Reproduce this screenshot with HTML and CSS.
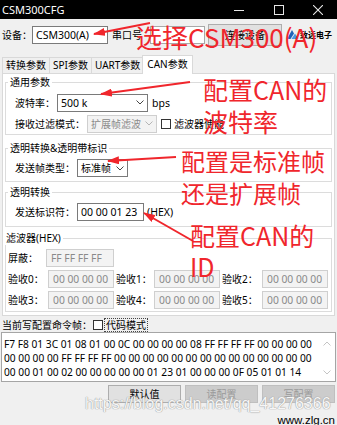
FILE: index.html
```html
<!DOCTYPE html>
<html lang="zh-CN">
<head>
<meta charset="utf-8">
<title>CSM300CFG</title>
<link rel="stylesheet" href="styles.css">
</head>
<body>
<div class="titlebar">
  <span class="title">CSM300CFG</span>
  <span class="ctl"><svg width="10" height="10" viewBox="0 0 10 10"><path d="M0 5.5h10" stroke="#e6e6e6" stroke-width="1"/></svg></span>
  <span class="ctl"><svg width="10" height="10" viewBox="0 0 10 10"><rect x="0.5" y="0.5" width="9" height="9" fill="none" stroke="#e6e6e6"/></svg></span>
  <span class="ctl ctl-close"><svg width="10" height="10" viewBox="0 0 10 10"><path d="M0 0L10 10M10 0L0 10" stroke="#e6e6e6" stroke-width="1.1"/></svg></span>
</div>

<div class="devrow">
  <span class="lbl dev-lbl">设备：</span>
  <div class="field dev-combo">CSM300(A)</div>
  <span class="lbl port-lbl">串口号</span>
  <div class="field port-combo"></div>
  <div class="btn connect">连接设备</div>
  <div class="logo">
    <svg width="13" height="11" viewBox="0 0 13 11"><path d="M1 10L6 1L8 4.5L4.5 10Z" fill="#1f64b8"/><path d="M5.5 10L9 4.5L12.5 10Z" fill="#4a98e6"/></svg>
    <span>致远电子</span>
  </div>
</div>

<div class="tabs">
  <div class="tab">转换参数</div>
  <div class="tab">SPI参数</div>
  <div class="tab">UART参数</div>
  <div class="tab active">CAN参数</div>
</div>

<div class="tabpage">
  <fieldset class="grp g1">
    <legend>通用参数</legend>
    <div class="row">
      <span class="lbl l-baud">波特率：</span>
      <div class="field combo c-baud"><span>500 k</span><svg width="8" height="5" viewBox="0 0 8 5"><path d="M0.5 0.5L4 4L7.5 0.5" fill="none" stroke="#444"/></svg></div>
      <span class="unit">bps</span>
    </div>
    <div class="row">
      <span class="lbl l-mode">接收过滤模式：</span>
      <div class="field combo disabled c-mode"><span>扩展帧滤波</span><svg width="8" height="5" viewBox="0 0 8 5"><path d="M0.5 0.5L4 4L7.5 0.5" fill="none" stroke="#b5b5b5"/></svg></div>
      <span class="check"></span><span class="check-lbl">滤波器使能</span>
    </div>
  </fieldset>

  <fieldset class="grp g2">
    <legend>透明转换&amp;透明带标识</legend>
    <div class="row row22">
      <span class="lbl l-six">发送帧类型：</span>
      <div class="field combo c-type"><span>标准帧</span><svg width="8" height="5" viewBox="0 0 8 5"><path d="M0.5 0.5L4 4L7.5 0.5" fill="none" stroke="#444"/></svg></div>
    </div>
  </fieldset>

  <fieldset class="grp g3">
    <legend>透明转换</legend>
    <div class="row row22">
      <span class="lbl l-six">发送标识符：</span>
      <div class="field c-id">00 00 01 23</div>
      <span class="unit">(HEX)</span>
    </div>
  </fieldset>

  <fieldset class="grp g4">
    <legend>滤波器(HEX)</legend>
    <div class="filters">
      <span class="flbl">屏蔽：</span><div class="field disabled fbox mask">FF FF FF FF</div>
      <span class="fill"></span><span class="fill"></span><span class="fill"></span><span class="fill"></span>
      <span class="flbl">验收0：</span><div class="field disabled fbox">00 00 00 00</div>
      <span class="flbl f2">验收1：</span><div class="field disabled fbox">00 00 00 00</div>
      <span class="flbl f2">验收2：</span><div class="field disabled fbox">00 00 00 00</div>
      <span class="flbl">验收3：</span><div class="field disabled fbox">00 00 00 00</div>
      <span class="flbl f2">验收4：</span><div class="field disabled fbox">00 00 00 00</div>
      <span class="flbl f2">验收5：</span><div class="field disabled fbox">00 00 00 00</div>
    </div>
  </fieldset>
</div>

<div class="cmdrow">
  <span class="lbl">当前写配置命令帧：</span>
  <span class="check cmd-check"></span>
  <span class="focus">代码模式</span>
</div>

<div class="cmdbox">
  <div class="hex">F7 F8 01 3C 01 08 01 00 0C 00 00 00 00 08 FF FF FF FF 00 00 00 00<br>00 00 00 00 FF FF FF FF 00 00 00 00 00 00 00 00 00 00 00 00 00 00<br>00 00 01 00 02 00 00 00 00 00 01 23 01 00 00 00 0F 05 01 01 14</div>
  <div class="scroll">
    <svg width="8" height="5" viewBox="0 0 8 5"><path d="M0.5 4.5L4 1L7.5 4.5" fill="none" stroke="#c4c4c4"/></svg>
    <svg width="8" height="5" viewBox="0 0 8 5"><path d="M0.5 0.5L4 4L7.5 0.5" fill="none" stroke="#c4c4c4"/></svg>
  </div>
</div>

<div class="btnrow">
  <div class="btn b-default">默认值</div>
  <div class="btn off b-read">读配置</div>
  <div class="btn off b-write">写配置</div>
</div>

<div class="footer">www.zlg.cn</div>

<div class="watermark">https://blog.csdn.net/qq_41276366</div>

<svg class="arrows" width="337" height="425" viewBox="0 0 337 425">
  <defs>
    <marker id="ah" markerUnits="userSpaceOnUse" markerWidth="12" markerHeight="8" refX="11" refY="4" orient="auto">
      <path d="M0 0L12 4L0 8Z" fill="#f0262c"/>
    </marker>
  </defs>
  <line x1="150" y1="23" x2="94" y2="34" stroke="#f0262c" stroke-width="2" marker-end="url(#ah)"/>
  <line x1="190" y1="82" x2="101" y2="94" stroke="#f0262c" stroke-width="2" marker-end="url(#ah)"/>
  <line x1="176" y1="157" x2="108" y2="161" stroke="#f0262c" stroke-width="2" marker-end="url(#ah)"/>
  <line x1="193" y1="241" x2="144" y2="213" stroke="#f0262c" stroke-width="2" marker-end="url(#ah)"/>
</svg>

<div class="note n1">选择CSM300(A)</div>
<div class="note n2">配置CAN的<br>波特率</div>
<div class="note n3">配置是标准帧<br>还是扩展帧</div>
<div class="note n4">配置CAN的<br>ID</div>
</body>
</html>
```

FILE: styles.css
```css
* { box-sizing: border-box; margin: 0; padding: 0; }

body {
  width: 337px;
  height: 425px;
  overflow: hidden;
  position: relative;
  background: #f0f0f0;
  color: #000;
  font-family: "Noto Sans", "Noto Sans CJK SC", sans-serif;
  font-size: 10px;
  line-height: 14px;
}

/* title bar */
.titlebar {
  height: 19px;
  background: #000;
  color: #fff;
  display: flex;
  align-items: center;
  padding-left: 2px;
}
.title { flex: 1; font-size: 11px; }
.ctl {
  width: 40px;
  height: 19px;
  display: flex;
  align-items: center;
  justify-content: center;
}
.ctl-close { width: 38px; }

/* device row */
.devrow {
  height: 31px;
  display: flex;
  align-items: center;
  padding-left: 2px;
}
.lbl { white-space: nowrap; }
.dev-lbl { width: 30px; }
.field {
  height: 18px;
  background: #fff;
  border: 1px solid #7a7a7a;
  display: flex;
  align-items: center;
  padding-left: 3px;
  white-space: nowrap;
}
.dev-combo { width: 76px; font-size: 10.5px; }
.port-lbl { margin-left: 4px; width: 38px; }
.port-combo { width: 55px; border-color: #a8a8a8; }
.btn {
  height: 18px;
  background: #e1e1e1;
  border: 1px solid #adadad;
  display: flex;
  align-items: center;
  justify-content: center;
}
.connect { width: 74px; height: 22px; margin-left: 3px; }
.logo {
  margin-left: 4px;
  display: flex;
  align-items: center;
  gap: 1px;
  font-size: 8px;
  font-weight: 700;
  white-space: nowrap;
}

/* tabs */
.tabs {
  height: 19px;
  margin-top: 4px;
  padding-left: 2px;
  display: flex;
  align-items: flex-end;
  position: relative;
  z-index: 1;
}
.tab {
  height: 16px;
  line-height: 15px;
  padding: 0 3px;
  border: 1px solid #d9d9d9;
  border-bottom: none;
  background: #f0f0f0;
  margin-right: -1px;
  white-space: nowrap;
}
.tab.active {
  height: 19px;
  line-height: 17px;
  margin-bottom: -1px;
  margin-left: -1px;
  padding: 0 4px;
  background: #fff;
}

/* tab page */
.tabpage {
  margin: 0 2px;
  border: 1px solid #d9d9d9;
  background: #fff;
  padding: 0 2px 3px 2px;
}
.grp {
  border: 1px solid #dcdcdc;
  padding: 0;
  min-width: 0;
}
.grp legend {
  margin-left: 2px;
  padding: 0 2px;
  line-height: 14px;
}
.g1 { margin-top: 1px; padding: 3px 0 0; }
.g2 { margin-top: 6px; padding: 2px 0 2px; }
.g3 { margin-top: 3px; padding: 2px 0 3px; }
.g4 { margin-top: 4px; padding: 2px 0 1px; }
.g4 legend { margin-left: -2px; }

.row {
  height: 21px;
  display: flex;
  align-items: center;
  padding-left: 9px;
}
.row22 { height: 22px; }
.l-baud { width: 42px; }
.l-mode { width: 72px; }
.l-six { width: 62px; }

.combo { justify-content: space-between; padding-right: 3px; }
.combo svg { flex: none; }
.c-baud { width: 91px; font-size: 10.5px; }
.c-mode { width: 70px; }
.c-type { width: 51px; }
.c-id { width: 67px; font-size: 10.5px; }
.disabled {
  background: #f3f3f3;
  border-color: #cfcfcf;
  color: #8a8a8a;
}
.unit { margin-left: 4px; font-size: 10.5px; }
.c-id + .unit { margin-left: 3px; }

.check {
  width: 10px;
  height: 10px;
  border: 1px solid #333;
  background: #fff;
  margin-left: 4px;
  flex: none;
}
.check-lbl { margin-left: 3px; white-space: nowrap; }

/* filters */
.filters {
  display: grid;
  grid-template-columns: 40px 66px 40px 66px 42px 66px;
  grid-auto-rows: 21px;
  align-items: center;
  padding-left: 2px;
}
.flbl { white-space: nowrap; }
.f2 { padding-left: 2px; }
.fbox { font-size: 10.3px; padding-left: 4px; }
.mask { margin-left: -2px; }

/* command row */
.cmdrow {
  height: 16px;
  padding: 2px 0 0 2px;
  display: flex;
  align-items: center;
}
.cmd-check { margin-left: 1px; }
.focus {
  margin-left: 2px;
  padding: 0 1px;
  outline: 1px dotted #444;
  line-height: 12px;
}

.cmdbox {
  height: 50px;
  margin: 0 1px;
  background: #fff;
  border: 1px solid #a5a5a5;
  display: flex;
  justify-content: space-between;
}
.hex {
  padding: 4px 0 0 2px;
  font-size: 10.2px;
  line-height: 14px;
  white-space: nowrap;
}
.scroll {
  width: 17px;
  padding: 8px 0 6px;
  display: flex;
  flex-direction: column;
  justify-content: space-between;
  align-items: center;
}

/* buttons */
.btnrow {
  margin-top: 3px;
  padding-right: 2px;
  display: flex;
  justify-content: flex-end;
  gap: 4px;
}
.b-default, .b-read, .b-write { width: 73px; }
.off {
  background: #cccccc;
  border-color: #bfbfbf;
  color: #9a9a9a;
}

.footer {
  margin-top: 10px;
  padding-right: 2px;
  text-align: right;
  font-family: "Liberation Sans", sans-serif;
  font-size: 11.5px;
  line-height: 14px;
}

/* overlays */
.watermark {
  position: absolute;
  left: 85px;
  top: 396px;
  font-family: "Liberation Sans", sans-serif;
  font-size: 16px;
  line-height: 16px;
  color: #f6f6f6;
  text-shadow: 0 0 1px #9a9a9a, 0 0 1px #9a9a9a;
  white-space: nowrap;
}
.arrows {
  position: absolute;
  left: 0;
  top: 0;
  pointer-events: none;
}
.note {
  position: absolute;
  color: #f0262c;
  font-family: "Noto Sans CJK SC", sans-serif;
  font-size: 25px;
  line-height: 32px;
  white-space: nowrap;
}
.n1 { left: 136px; top: 22px; line-height: 30px; font-size: 26px; }
.n2 { left: 203px; top: 73px; }
.n3 { left: 181px; top: 145px; font-size: 24px; }
.n4 { left: 190px; top: 220px; line-height: 31px; }
```
